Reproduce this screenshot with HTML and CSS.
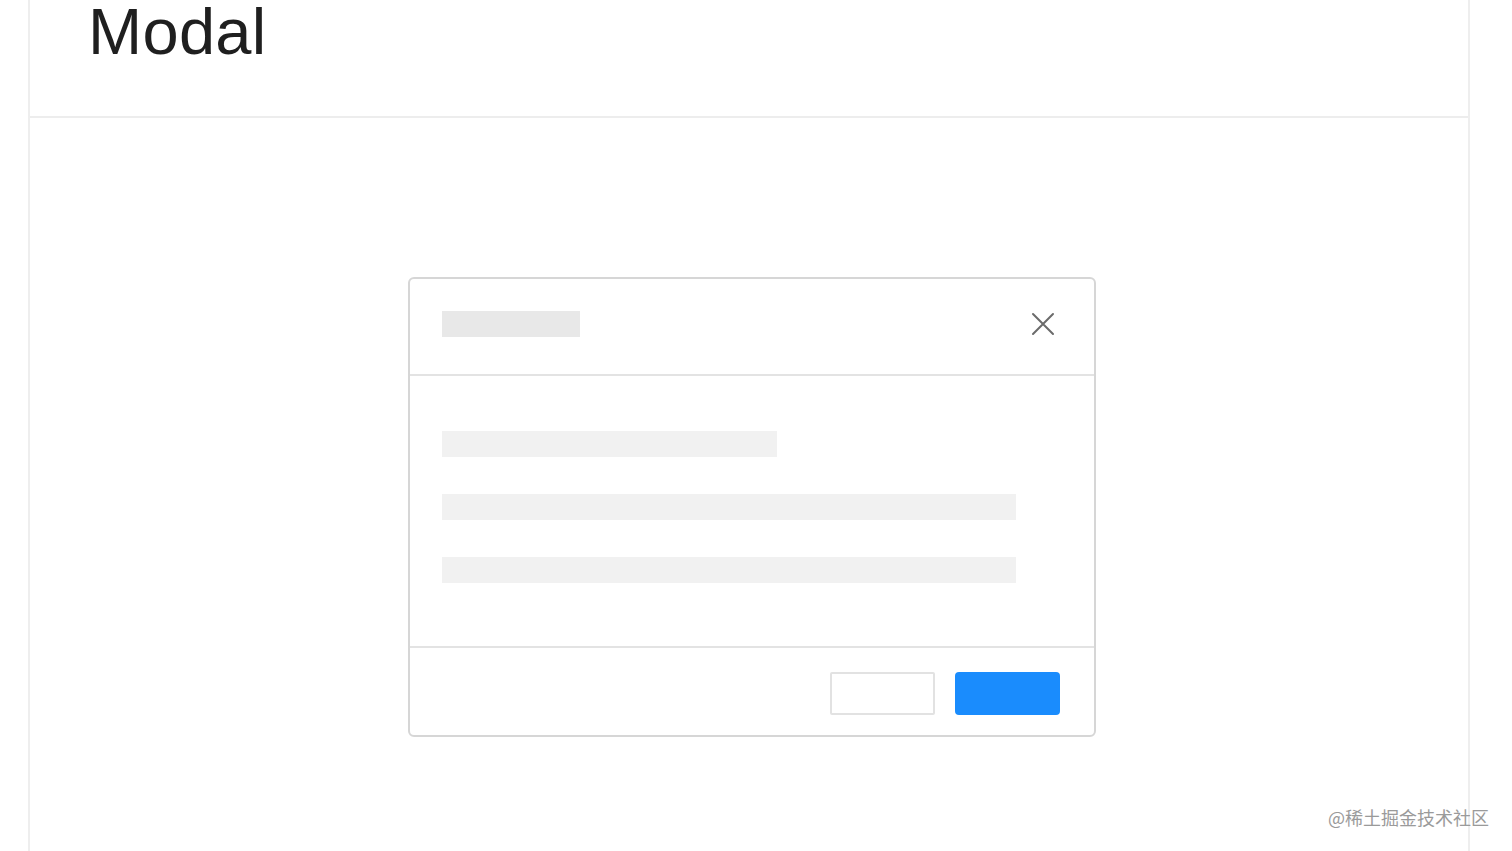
FILE: index.html
```html
<!DOCTYPE html>
<html lang="zh">
<head>
<meta charset="utf-8">
<title>Modal</title>
<link rel="stylesheet" href="styles.css">
</head>
<body>
<div class="page">
  <section class="card">
    <header class="card-header">
      <h1 class="card-title">Modal</h1>
    </header>
    <div class="card-body">
      <div class="modal">
        <div class="modal-header">
          <div class="ph ph-title"></div>
          <svg class="close" width="24" height="24" viewBox="0 0 24 24" aria-hidden="true">
            <path d="M2 2 L22 22 M22 2 L2 22" stroke="#6b6b6b" stroke-width="2" fill="none" stroke-linecap="round"/>
          </svg>
        </div>
        <div class="modal-body">
          <div class="ph ph-line ph-short"></div>
          <div class="ph ph-line"></div>
          <div class="ph ph-line"></div>
        </div>
        <div class="modal-footer">
          <div class="btn btn-default"></div>
          <div class="btn btn-primary"></div>
        </div>
      </div>
    </div>
  </section>
</div>
<div class="watermark">@稀土掘金技术社区</div>
</body>
</html>
```

FILE: styles.css
```css
html, body {
  margin: 0;
  padding: 0;
  background: #ffffff;
  height: 100%;
  overflow: hidden;
}
body {
  font-family: "Liberation Sans", Arial, "Noto Sans CJK SC", sans-serif;
  position: relative;
}
.page {
  padding-left: 28px;
  width: 1442px;
}
.card {
  border-left: 2px solid #eeeeee;
  border-right: 2px solid #eeeeee;
  min-height: 851px;
  box-sizing: border-box;
}
.card-header {
  height: 118px;
  box-sizing: border-box;
  border-bottom: 2px solid #ededed;
  padding-left: 58px;
}
.card-title {
  margin: 0;
  font-size: 65px;
  line-height: 64px;
  font-weight: 400;
  color: #1f1f1f;
  letter-spacing: 0.3px;
}
.card-body {
  display: flex;
  justify-content: center;
  padding-top: 159px;
  padding-left: 5px;
}
.modal {
  width: 688px;
  height: 460px;
  box-sizing: border-box;
  border: 2px solid #d6d6d6;
  border-radius: 6px;
  display: flex;
  flex-direction: column;
  background: #fff;
}
.modal-header {
  height: 97px;
  flex: none;
  box-sizing: border-box;
  border-bottom: 2px solid #e3e3e3;
  display: flex;
  align-items: flex-start;
  justify-content: space-between;
  padding: 32px 39px 0 32px;
}
.ph {
  background: #f1f1f1;
}
.ph-title {
  width: 138px;
  height: 26px;
  background: #e8e8e8;
}
.close {
  margin-top: 1px;
}
.modal-body {
  flex: 1;
  display: flex;
  flex-direction: column;
  gap: 37px;
  padding: 55px 0 0 32px;
}
.ph-line {
  width: 574px;
  height: 26px;
}
.ph-short {
  width: 335px;
}
.modal-footer {
  height: 89px;
  flex: none;
  box-sizing: border-box;
  border-top: 2px solid #e3e3e3;
  display: flex;
  justify-content: flex-end;
  gap: 20px;
  padding: 24px 34px 0 0;
}
.btn {
  width: 105px;
  height: 43px;
  box-sizing: border-box;
  border-radius: 4px;
}
.btn-default {
  border: 2px solid #e2e2e2;
  border-radius: 2px;
  background: #fff;
}
.btn-primary {
  background: #1a8cfd;
}
.watermark {
  position: absolute;
  left: 1328px;
  top: 805px;
  font-size: 18px;
  color: #9a9a9a;
  font-family: "Noto Sans CJK SC", sans-serif;
  line-height: 24px;
}
```
